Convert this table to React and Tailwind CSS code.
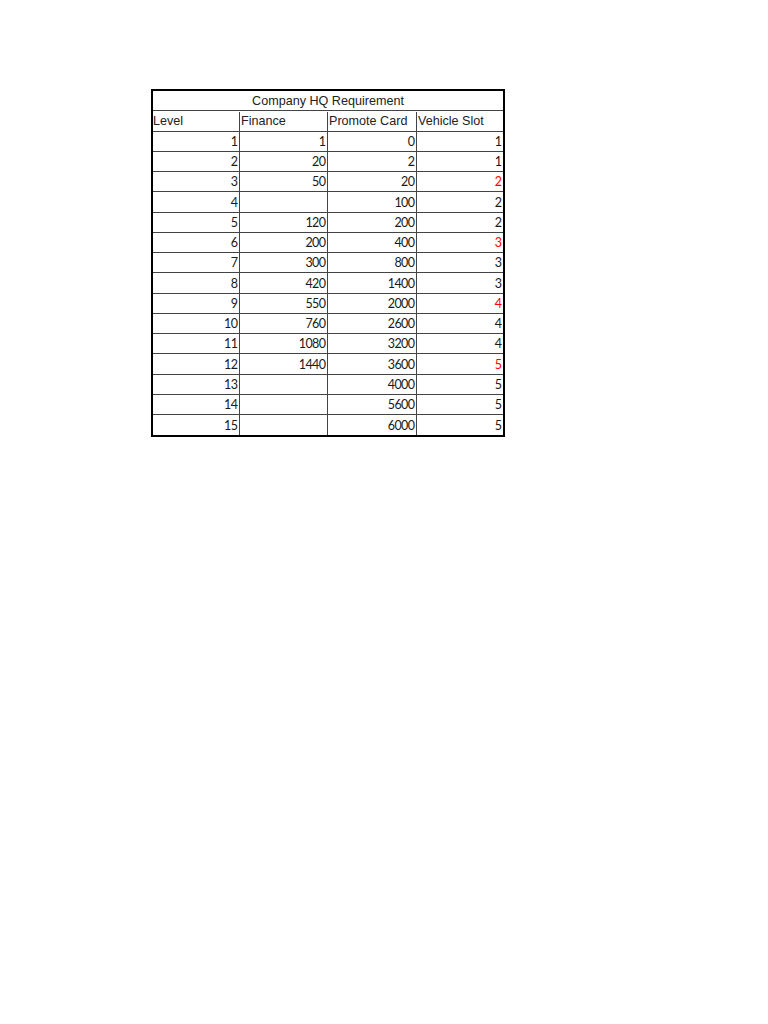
import React from "react";

const rows = [
  [1, 1, 0, 1, false],
  [2, 20, 2, 1, false],
  [3, 50, 20, 2, true],
  [4, "", 100, 2, false],
  [5, 120, 200, 2, false],
  [6, 200, 400, 3, true],
  [7, 300, 800, 3, false],
  [8, 420, 1400, 3, false],
  [9, 550, 2000, 4, true],
  [10, 760, 2600, 4, false],
  [11, 1080, 3200, 4, false],
  [12, 1440, 3600, 5, true],
  [13, "", 4000, 5, false],
  [14, "", 5600, 5, false],
  [15, "", 6000, 5, false],
];

const numCls =
  "flex items-center justify-end pt-[2px] pr-[1.5px] text-[12.5px] tracking-[-0.55px] text-[#1a1a1a] [font-family:Lato,'Liberation_Sans',sans-serif]";

export default function App() {
  return (
    <div className="min-h-[1024px] w-[768px] bg-white pt-[89px] pl-[151px]">
      <div className="w-[354px] border-2 border-black bg-white">
        <div className="flex h-[20.25px] items-center justify-center border-b border-[#444] pt-px text-[12.6px] text-[#222] [font-family:'Liberation_Sans',Arial,sans-serif]">
          Company HQ Requirement
        </div>
        <div className="flex h-[20.25px] border-b border-[#444] pt-px text-[12.6px] text-[#222] [font-family:'Liberation_Sans',Arial,sans-serif]">
          <div className="flex w-[87px] items-center border-r border-[#444]">Level</div>
          <div className="flex w-[88px] items-center border-r border-[#444] pl-px">Finance</div>
          <div className="flex w-[89px] items-center border-r border-[#444] pl-px">Promote Card</div>
          <div className="flex w-[86px] items-center pl-px">Vehicle Slot</div>
        </div>
        {rows.map((r, i) => (
          <div
            key={i}
            className={
              i === rows.length - 1
                ? "flex h-[20.25px]"
                : "flex h-[20.25px] border-b border-[#444]"
            }
          >
            <div className={numCls + " w-[87px] border-r border-[#444]"}>{r[0]}</div>
            <div className={numCls + " w-[88px] border-r border-[#444]"}>{r[1]}</div>
            <div className={numCls + " w-[89px] border-r border-[#444]"}>{r[2]}</div>
            <div className={numCls + " w-[86px]"}>
              <span className={r[4] ? "text-[#ff0000]" : ""}>{r[3]}</span>
            </div>
          </div>
        ))}
      </div>
    </div>
  );
}
